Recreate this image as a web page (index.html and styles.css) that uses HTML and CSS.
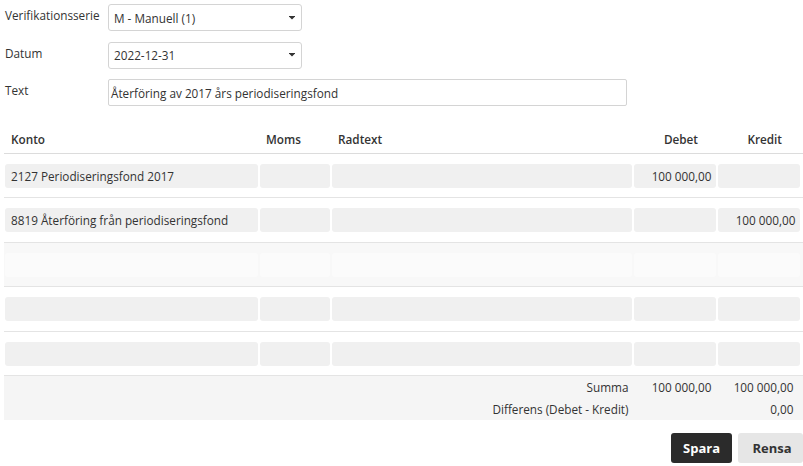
FILE: index.html
```html
<!DOCTYPE html>
<html lang="sv">
<head>
<meta charset="utf-8">
<title>Verifikation</title>
<link rel="stylesheet" href="styles.css">
</head>
<body>
<div class="page">
  <div class="form">
    <div class="form-row">
      <label class="lbl">Verifikationsserie</label>
      <div class="select">
        <span>M - Manuell (1)</span>
        <svg class="caret" width="6" height="4" viewBox="0 0 6 4"><path d="M0 0h6v1H0z M0.5 1h5L3 3.6z" fill="#333"/></svg>
      </div>
    </div>
    <div class="form-row">
      <label class="lbl">Datum</label>
      <div class="select">
        <span>2022-12-31</span>
        <svg class="caret" width="6" height="4" viewBox="0 0 6 4"><path d="M0 0h6v1H0z M0.5 1h5L3 3.6z" fill="#333"/></svg>
      </div>
    </div>
    <div class="form-row">
      <label class="lbl">Text</label>
      <div class="input">Återföring av 2017 års periodiseringsfond</div>
    </div>
  </div>

  <div class="table">
    <div class="thead grid">
      <div class="th">Konto</div>
      <div class="th">Moms</div>
      <div class="th">Radtext</div>
      <div class="th num">Debet</div>
      <div class="th num">Kredit</div>
    </div>
    <div class="row grid">
      <div class="cell">2127 Periodiseringsfond 2017</div>
      <div class="cell"></div>
      <div class="cell"></div>
      <div class="cell num">100 000,00</div>
      <div class="cell num"></div>
    </div>
    <div class="row grid">
      <div class="cell">8819 Återföring från periodiseringsfond</div>
      <div class="cell"></div>
      <div class="cell"></div>
      <div class="cell num"></div>
      <div class="cell num">100 000,00</div>
    </div>
    <div class="row grid hover">
      <div class="cell"></div>
      <div class="cell"></div>
      <div class="cell"></div>
      <div class="cell"></div>
      <div class="cell"></div>
    </div>
    <div class="row grid">
      <div class="cell"></div>
      <div class="cell"></div>
      <div class="cell"></div>
      <div class="cell"></div>
      <div class="cell"></div>
    </div>
    <div class="row grid">
      <div class="cell"></div>
      <div class="cell"></div>
      <div class="cell"></div>
      <div class="cell"></div>
      <div class="cell"></div>
    </div>
    <div class="tfoot">
      <div class="grid frow">
        <div></div><div></div>
        <div class="flabel">Summa</div>
        <div class="fval">100 000,00</div>
        <div class="fval k">100 000,00</div>
      </div>
      <div class="grid frow">
        <div></div><div></div>
        <div class="flabel">Differens (Debet - Kredit)</div>
        <div class="fval"></div>
        <div class="fval k">0,00</div>
      </div>
    </div>
  </div>

  <div class="actions">
    <button class="btn btn-dark">Spara</button>
    <button class="btn btn-light">Rensa</button>
  </div>
</div>
</body>
</html>
```

FILE: styles.css
```css
* { box-sizing: border-box; }
html, body { margin: 0; padding: 0; overflow: hidden; }
body {
  font-family: "Open Sans", "Liberation Sans", sans-serif;
  font-size: 11.75px;
  color: #333;
  background: #fff;
}
.page { padding: 4px 0 0 4px; width: 803px; }

.form { display: flex; flex-direction: column; gap: 10.5px; }
.form-row { display: flex; align-items: flex-start; }
.lbl { width: 104px; padding-top: 3px; padding-left: 1px; line-height: 17px; }
.select {
  width: 194px; height: 27px;
  border: 1px solid #d4d4d4; border-radius: 3px;
  display: flex; align-items: center; justify-content: space-between;
  padding: 0 6px 0 5px; background: #fff;
}
.caret { display: block; }
.input {
  width: 519px; height: 27px;
  border: 1px solid #d4d4d4; border-radius: 2px;
  display: flex; align-items: center; padding: 0 2px; background: #fff;
}

.table { margin-top: 21.5px; }
.grid {
  display: grid;
  grid-template-columns: 252.5px 69.5px 299.5px 81.5px 81.5px;
  column-gap: 2.5px;
  padding-left: 1px;
}
.thead { height: 26px; border-bottom: 1px solid #dcdcdc; align-items: center; padding-bottom: 1px; }
.th { font-weight: 600; padding: 0 6px; line-height: 17px; }
.th.num { text-align: right; padding-right: 17.5px; }

.row { padding-top: 10px; padding-bottom: 9.5px; border-bottom: 1px solid #e4e4e4; }
.cell {
  height: 24px; line-height: 24px; background: #f0f0f0; border-radius: 3px;
  padding: 0 6px; white-space: nowrap; overflow: hidden;
}
.cell.num { text-align: right; padding-right: 4px; }
.row.hover { background: #f8f8f8; }
.row.hover .cell { background: #fbfbfb; }

.tfoot { background: #f5f5f5; }
.frow { height: 22px; line-height: 22px; }
.flabel { text-align: right; padding-right: 3px; }
.fval { text-align: right; padding-right: 4px; }
.fval.k { padding-right: 6px; }

.actions { display: flex; justify-content: flex-end; gap: 6px; margin-top: 13px; }
.btn {
  font-family: "Open Sans", "Liberation Sans", sans-serif;
  font-size: 13px; font-weight: 700;
  height: 30px; border: 0; border-radius: 3px; padding: 0 12px; cursor: pointer;
}
.btn-dark { background: #2b2b2b; color: #fff; width: 61px; }
.btn-light { background: #e6e6e6; color: #333; width: 65px; padding: 0 10px 0 13px; }
```
